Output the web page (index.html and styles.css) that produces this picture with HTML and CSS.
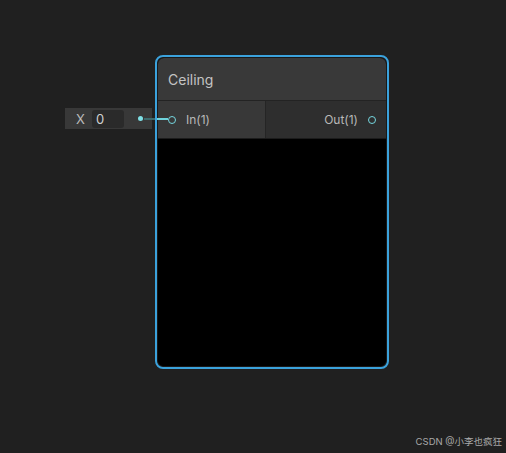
FILE: index.html
```html
<!DOCTYPE html>
<html>
<head>
<meta charset="utf-8">
<link rel="stylesheet" href="styles.css">
</head>
<body>
<div class="canvas">
  <div class="port-field">
    <span class="axis">X</span>
    <span class="value">0</span>
    <span class="dot"></span>
  </div>
  <div class="edge-dim"></div>
  <div class="node">
    <div class="node-inner">
      <div class="header">Ceiling</div>
      <div class="ports">
        <div class="in-port"><span class="port-circle"></span><span class="label">In(1)</span></div>
        <div class="out-port"><span class="label">Out(1)</span><span class="port-circle"></span></div>
      </div>
      <div class="preview"></div>
    </div>
  </div>
  <div class="edge-bright"></div>
  <div class="watermark">CSDN @小李也疯狂</div>
</div>
</body>
</html>
```
FILE: styles.css
```css
html, body { margin: 0; padding: 0; }
body {
  width: 506px; height: 453px; background: #202020; overflow: hidden;
  font-family: Inter, "Noto Sans", "Noto Sans CJK SC", sans-serif;
}
.canvas { position: relative; width: 506px; height: 453px; }
.port-field {
  position: absolute; left: 65px; top: 108px; width: 87px; height: 21px;
  background: #383838; display: flex; align-items: center; box-sizing: border-box;
  padding-left: 11px;
}
.axis { color: #bcbcbc; font-size: 13px; width: 16px; }
.value {
  width: 32px; height: 18px; background: #2a2a2a; border-radius: 3px;
  color: #d0d0d0; font-size: 13px; line-height: 18px; padding-left: 4px; box-sizing: border-box;
}
.dot {
  width: 5px; height: 5px; border-radius: 50%; background: #7fe0e6;
  margin-left: 14px;
}
.edge-dim {
  position: absolute; left: 144px; top: 118px; width: 13px; height: 2px; background: #3d6b6e;
}
.edge-bright {
  position: absolute; left: 157px; top: 118px; width: 11px; height: 2px; background: #6fd3dc;
}
.node {
  position: absolute; left: 155px; top: 55px; width: 234px; height: 314px;
  border: 2px solid #3ba2dc; border-radius: 8px; box-sizing: border-box;
  background: #191919; padding: 1px; overflow: hidden;
}
.node-inner {
  height: 100%; display: flex; flex-direction: column; border-radius: 6px; overflow: hidden;
  background: #000;
}
.header {
  height: 42px; flex: none; background: #393939; color: #c4c4c4; font-size: 14px;
  display: flex; align-items: center; padding-left: 10px; border-bottom: 1px solid #232323;
}
.ports { height: 37px; flex: none; display: flex; border-bottom: 1px solid #1c1c1c; background: #2e2e2e; }
.in-port {
  width: 108px; background: #383838; display: flex; align-items: center;
  padding-left: 10px; box-sizing: border-box; border-right: 1px solid #252525;
}
.out-port { flex: 1; display: flex; align-items: center; justify-content: flex-end; padding-right: 10px; }
.label { color: #b8b8b8; font-size: 12px; }
.in-port .label { margin-left: 10px; }
.out-port .label { margin-right: 10px; }
.port-circle {
  width: 6px; height: 6px; border: 1.5px solid #74d6df; border-radius: 50%; flex: none;
}
.preview { flex: 1; background: #000; }
.watermark {
  position: absolute; right: 4px; top: 434px; color: #a8a8a8; font-size: 9.5px;
}
```
